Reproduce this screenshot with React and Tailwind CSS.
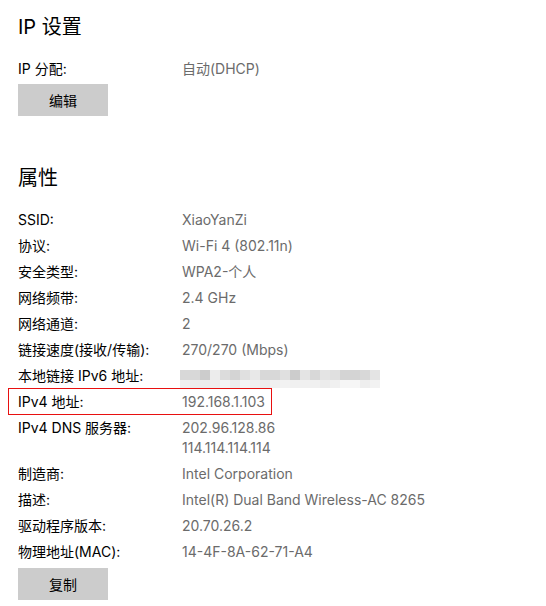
const blurTop = ["#d8d8d8", "#d8d8d8", "#cccccc", "#ececec", "#dcdcdc", "#d4d4d4", "#e0e0e0", "#e8e8e8", "#d8d8d8", "#d8d8d8", "#e0e0e0", "#cccccc", "#e4e4e4", "#d8d8d8", "#e4e4e4", "#e0e0e0", "#d4d4d4", "#d4d4d4", "#d8d8d8", "#e4e4e4"]
const blurBottom = ["#f0f0f0", "#ececec", "#ececec", "#eeeeee", "#f4f4f4", "#ececec", "#f4f4f4", "#f0f0f0", "#ececec", "#f0f0f0", "#f2f2f2", "#f0f0f0", "#f0f0f0", "#f0f0f0", "#ececec", "#f0f0f0", "#f6f6f6", "#f6f6f6", "#eeeeee", "#f2f2f2"]

function Row({label, children, highlight}) {
    return (
        <div className="relative flex py-[3px] leading-5">
            <div className="w-[164px] shrink-0 text-black">{label}</div>
            <div className="text-[#6b6b6b]">{children}</div>
            {highlight && (
                <span className="absolute left-[-10px] top-[-1px] h-[27px] w-[264px] border border-[#e81010]"/>
            )}
        </div>
    )
}

function Blurred() {
    return (
        <div className="mt-[4px] flex flex-col">
            <div className="flex">
                {blurTop.map((c, i) => (
                    <div key={i} className="h-[10px] w-[10px]" style={{backgroundColor: c}}/>
                ))}
            </div>
            <div className="flex">
                {blurBottom.map((c, i) => (
                    <div key={i} className="h-[8px] w-[10px]" style={{backgroundColor: c}}/>
                ))}
            </div>
        </div>
    )
}

function GrayButton({children}) {
    return (
        <button className="h-8 w-[90px] bg-[#cccccc] text-[14px] text-black">{children}</button>
    )
}

export default function App() {
    return (
        <div className="h-[606px] w-[546px] overflow-hidden bg-white px-[18px] text-[14px]"
             style={{fontFamily: 'Inter, "Noto Sans CJK SC", sans-serif'}}>
            <h2 className="mt-[13px] text-[20px] leading-7 text-black">IP 设置</h2>
            <div className="mt-[15px]">
                <Row label="IP 分配:">自动(DHCP)</Row>
            </div>
            <div className="mt-[2px]">
                <GrayButton>编辑</GrayButton>
            </div>

            <h2 className="mt-[48px] text-[20px] leading-7 text-black">属性</h2>
            <div className="mt-[15px]">
                <Row label="SSID:">XiaoYanZi</Row>
                <Row label="协议:">Wi-Fi 4 (802.11n)</Row>
                <Row label="安全类型:">WPA2-个人</Row>
                <Row label="网络频带:">2.4 GHz</Row>
                <Row label="网络通道:">2</Row>
                <Row label="链接速度(接收/传输):">270/270 (Mbps)</Row>
                <div className="flex h-[26px] py-[3px] leading-5">
                    <div className="w-[162px] shrink-0 text-black">本地链接 IPv6 地址:</div>
                    <Blurred/>
                </div>
                <Row label="IPv4 地址:" highlight>192.168.1.103</Row>
                <Row label="IPv4 DNS 服务器:">
                    <div>202.96.128.86</div>
                    <div>114.114.114.114</div>
                </Row>
                <Row label="制造商:">Intel Corporation</Row>
                <Row label="描述:">Intel(R) Dual Band Wireless-AC 8265</Row>
                <Row label="驱动程序版本:">20.70.26.2</Row>
                <Row label="物理地址(MAC):">14-4F-8A-62-71-A4</Row>
            </div>
            <div className="mt-[3px]">
                <GrayButton>复制</GrayButton>
            </div>
        </div>
    )
}
